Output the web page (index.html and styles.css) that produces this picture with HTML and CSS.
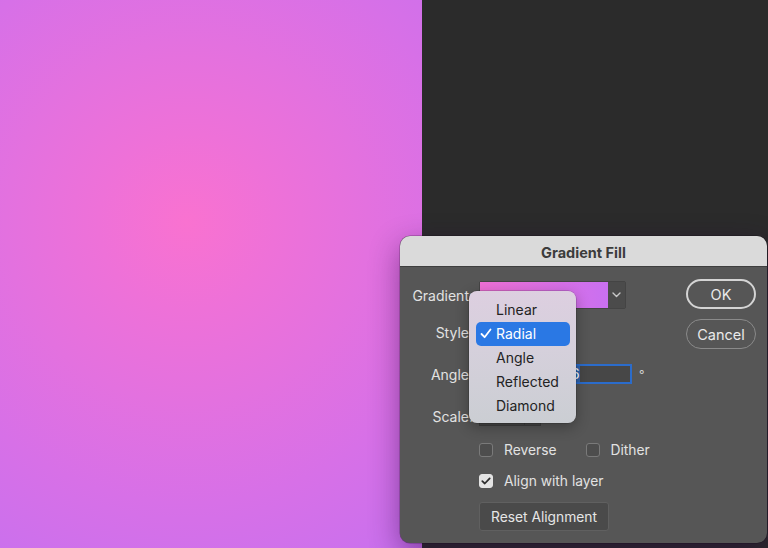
FILE: index.html
```html
<!DOCTYPE html>
<html lang="en">
<head>
<meta charset="utf-8">
<title>Gradient Fill</title>
<link rel="stylesheet" href="styles.css">
</head>
<body>
<div class="workspace">
  <div class="canvas"></div>
  <div class="pasteboard"></div>

  <div class="dialog">
    <div class="titlebar">Gradient Fill</div>
    <div class="dialog-body">
      <div class="form">
        <div class="row row-gradient">
          <span class="label">Gradient:</span>
          <div class="gradient-picker">
            <div class="swatch"></div>
            <div class="picker-arrow">
              <svg width="9" height="6" viewBox="0 0 9 6"><path d="M1 1 L4.5 4.5 L8 1" fill="none" stroke="#c8c8c8" stroke-width="1.4" stroke-linecap="round" stroke-linejoin="round"/></svg>
            </div>
          </div>
        </div>
        <div class="row row-style">
          <span class="label">Style:</span>
          <div class="select"></div>
        </div>
        <div class="row row-angle">
          <span class="label">Angle:</span>
          <div class="dial"></div>
          <div class="field focused"><span class="selected">6</span></div>
          <span class="unit">°</span>
        </div>
        <div class="row row-scale">
          <span class="label">Scale:</span>
          <div class="field scale-field"></div>
          <div class="stepper"></div>
        </div>
        <div class="row row-checks">
          <span class="label"></span>
          <label class="check"><span class="box"></span>Reverse</label>
          <label class="check dither"><span class="box"></span>Dither</label>
        </div>
        <div class="row row-align">
          <span class="label"></span>
          <label class="check"><span class="box checked">
            <svg width="10" height="8" viewBox="0 0 10 8"><path d="M1.3 4.2 L3.8 6.5 L8.7 1.4" fill="none" stroke="#2e2e2e" stroke-width="1.8" stroke-linecap="round" stroke-linejoin="round"/></svg>
          </span>Align with layer</label>
        </div>
        <div class="row row-reset">
          <span class="label"></span>
          <button class="btn-reset">Reset Alignment</button>
        </div>
      </div>
      <div class="actions">
        <button class="btn-pill primary">OK</button>
        <button class="btn-pill">Cancel</button>
      </div>
    </div>
  </div>

  <ul class="popup-menu">
    <li>Linear</li>
    <li class="active">
      <svg class="tick" width="12" height="11" viewBox="0 0 12 11"><path d="M1.5 6 L4.6 9.2 L10.5 1.5" fill="none" stroke="#fff" stroke-width="1.8" stroke-linecap="round" stroke-linejoin="round"/></svg>
      Radial
    </li>
    <li>Angle</li>
    <li>Reflected</li>
    <li>Diamond</li>
  </ul>
</div>
</body>
</html>
```

FILE: styles.css
```css
* { box-sizing: border-box; }

html, body {
  margin: 0;
  padding: 0;
  width: 768px;
  height: 548px;
  overflow: hidden;
  font-family: Inter, "Liberation Sans", sans-serif;
  font-size: 14px;
}

.workspace {
  position: relative;
  display: flex;
  width: 768px;
  height: 548px;
}

/* document canvas with the radial fill */
.canvas {
  width: 422px;
  height: 548px;
  background: radial-gradient(circle farthest-corner at 187px 222px,
    #f972d0 0%, #ee71d8 22%, #e371df 45%, #d770e7 70%, #c870ee 100%);
}

.pasteboard {
  flex: 1;
  background: #2b2b2b;
}

/* modal window */
.dialog {
  position: absolute;
  left: 400px;
  top: 236px;
  width: 367px;
  height: 307px;
  border-radius: 10px;
  background: #565656;
  overflow: hidden;
  box-shadow: 0 10px 30px rgba(40, 0, 60, 0.45), 0 0 0 0.5px rgba(0, 0, 0, 0.35);
  display: flex;
  flex-direction: column;
}

.titlebar {
  height: 31px;
  flex: none;
  background: #dadada;
  border-bottom: 1px solid #3e3e3e;
  color: #3c3c3c;
  font-weight: 700;
  font-size: 14.5px;
  display: flex;
  align-items: center;
  justify-content: center;
  padding-top: 2px;
}

.dialog-body {
  flex: 1;
  display: flex;
  color: #e2e2e2;
}

.form {
  flex: 1;
  padding-left: 11px;
  display: flex;
  flex-direction: column;
}

.row {
  display: flex;
  align-items: center;
  height: 24px;
}

.label {
  width: 62px;
  margin-right: 6px;
  text-align: right;
  flex: none;
  white-space: nowrap;
}

.row-gradient { margin-top: 14px; height: 28px; }
.row-style    { margin-top: 11px; }
.row-angle    { margin-top: 18px; }
.row-scale    { margin-top: 18px; }
.row-checks   { margin-top: 13px; height: 18px; }
.row-align    { margin-top: 13px; height: 18px; }
.row-reset    { margin-top: 12px; height: 29px; }

/* gradient preview + dropdown */
.gradient-picker {
  display: flex;
  height: 28px;
  border: 1px solid #444;
  border-radius: 2px;
}
.swatch {
  width: 128px;
  background: linear-gradient(90deg, #ee6fd5, #c970f1);
}
.picker-arrow {
  width: 17px;
  background: #4b4b4b;
  display: flex;
  align-items: center;
  justify-content: center;
}

.select {
  width: 86px;
  height: 22px;
  background: #474747;
  border: 1px solid #3e3e3e;
}

.dial {
  width: 24px;
  height: 24px;
  border-radius: 50%;
  border: 1px solid #3c3c3c;
  background: #4a4a4a;
  margin-left: 4px;
  margin-right: 48px;
}

.field {
  height: 20px;
  background: #474747;
  border: 1px solid #3e3e3e;
  color: #e2e2e2;
  line-height: 18px;
  padding-left: 4px;
}
.field.focused {
  width: 77px;
  border: 2px solid #2b6ccb;
  padding-left: 13px;
  line-height: 16px;
}
.selected {
  background: #2f63aa;
  color: #fff;
  display: inline-block;
  height: 16px;
  padding-left: 1px;
}
.unit {
  margin-left: 7px;
  font-size: 12px;
  color: #d0d0d0;
}
.scale-field { width: 46px; }
.stepper {
  width: 16px;
  height: 20px;
  background: #474747;
  border: 1px solid #3e3e3e;
  border-left: none;
}

.check {
  display: flex;
  align-items: center;
  gap: 11px;
  color: #e2e2e2;
  font-size: 13.8px;
}
.check.dither { margin-left: 29px; }
.box {
  width: 14px;
  height: 14px;
  border: 1px solid #7a7a7a;
  border-radius: 3px;
  background: #4d4d4d;
  display: flex;
  align-items: center;
  justify-content: center;
}
.box.checked {
  background: #e4e4e4;
  border-color: #e4e4e4;
}

.btn-reset {
  height: 29px;
  width: 130px;
  background: #4a4a4a;
  border: 1px solid #606060;
  border-radius: 3px;
  color: #e6e6e6;
  font: inherit;
  font-size: 13.8px;
  padding: 0;
}

.actions {
  width: 70px;
  margin-right: 11px;
  padding-top: 12px;
  display: flex;
  flex-direction: column;
  gap: 10px;
}
.btn-pill {
  height: 30px;
  border-radius: 15px;
  background: transparent;
  border: 1px solid #8a8a8a;
  color: #eaeaea;
  font: inherit;
  font-size: 14.5px;
  padding: 0;
}
.btn-pill.primary {
  border: 2px solid #d4d4d4;
}

/* open style popup */
.popup-menu {
  position: absolute;
  left: 469px;
  top: 291px;
  width: 107px;
  margin: 0;
  padding: 7px 6px 5px 7px;
  list-style: none;
  border-radius: 8px;
  background: linear-gradient(180deg, #ddcfe0 0%, #d6d0dc 40%, #cbced3 100%);
  box-shadow: 0 4px 14px rgba(0, 0, 0, 0.3), 0 0 0 0.5px rgba(0, 0, 0, 0.25);
  color: #232323;
}
.popup-menu li {
  position: relative;
  height: 24px;
  line-height: 24px;
  padding-left: 20px;
  border-radius: 5px;
}
.popup-menu li.active {
  background: #2a78e4;
  color: #fff;
}
.tick {
  position: absolute;
  left: 4px;
  top: 6px;
}
```
